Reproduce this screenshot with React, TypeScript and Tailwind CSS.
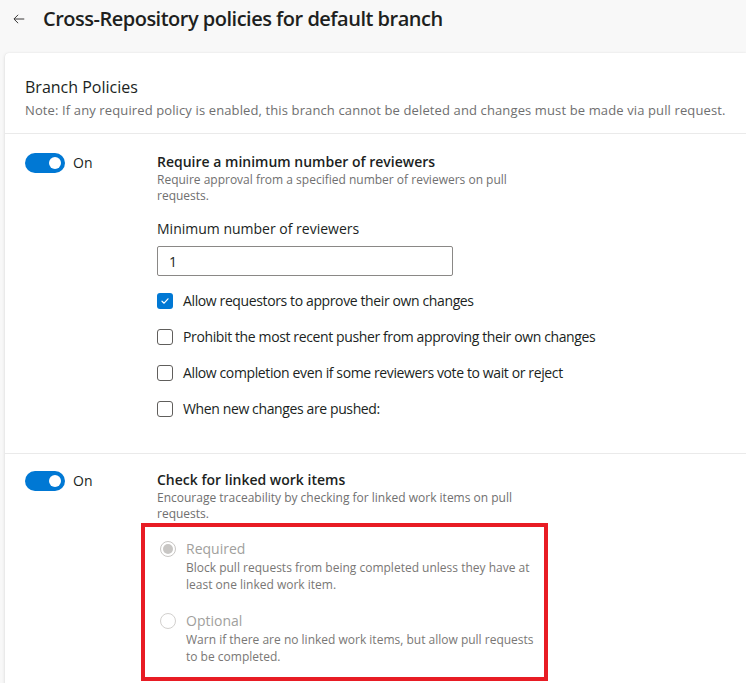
import React from "react";

const font = "font-['Segoe_UI','Open_Sans','Noto_Sans',sans-serif]";

function Toggle() {
  return (
    <div className="flex items-center gap-[8px]">
      <div className="w-[40px] h-[20px] rounded-full bg-[#0078d4] flex items-center justify-end pr-[4px]">
        <div className="w-[12px] h-[12px] rounded-full bg-white" />
      </div>
      <span className="text-[14px] text-[#201f1e] leading-[20px]">On</span>
    </div>
  );
}

function Checkbox({ checked, label }: { checked?: boolean; label: string }) {
  return (
    <div className="flex items-center gap-[10px] h-[20px]">
      {checked ? (
        <div className="w-[16px] h-[16px] rounded-[3px] bg-[#0078d4] flex items-center justify-center">
          <svg width="10" height="10" viewBox="0 0 10 10" fill="none">
            <path d="M2 5.2 L4.1 7.2 L8 2.8" stroke="white" strokeWidth="1.2" strokeLinecap="round" strokeLinejoin="round" />
          </svg>
        </div>
      ) : (
        <div className="w-[16px] h-[16px] rounded-[3px] border border-[#605e5c] bg-white" />
      )}
      <span className="text-[14px] text-[#201f1e] leading-[20px] tracking-[-0.38px]">{label}</span>
    </div>
  );
}

function Radio({ selected, label, desc }: { selected?: boolean; label: string; desc: string }) {
  return (
    <div className="flex gap-[10px]">
      <div className="pt-[2px]">
        {selected ? (
          <div className="w-[16px] h-[16px] rounded-full border border-[#c8c6c4] flex items-center justify-center">
            <div className="w-[10px] h-[10px] rounded-full bg-[#c8c6c4]" />
          </div>
        ) : (
          <div className="w-[16px] h-[16px] rounded-full border border-[#d2d0ce]" />
        )}
      </div>
      <div>
        <div className="text-[14px] leading-[20px] text-[#a19f9d]">{label}</div>
        <div className="text-[12px] leading-[17px] text-[#797775] max-w-[352px]">{desc}</div>
      </div>
    </div>
  );
}

export default function App() {
  return (
    <div className={`min-h-screen bg-[#f8f8f8] overflow-hidden ${font}`}>
      {/* Header */}
      <div className="h-[38px] flex items-center pl-[12px]">
        <svg width="14" height="14" viewBox="0 0 16 16" fill="none">
          <path d="M14 8H2.5M7 3.2 2.2 8 7 12.8" stroke="#323130" strokeWidth="1.1" />
        </svg>
        <h1 className="ml-[17px] text-[20px] font-semibold text-[#201f1e] leading-[28px] tracking-[-0.5px]">
          Cross-Repository policies for default branch
        </h1>
      </div>

      {/* Card */}
      <div className="ml-[5px] mt-[15px] bg-white rounded-tl-[4px] shadow-[0_1.6px_3.6px_rgba(0,0,0,0.13),0_0.3px_0.9px_rgba(0,0,0,0.11)]">
        <div className="px-[20px] pt-[23px] pb-[14px] border-b border-[#eaeaea]">
          <div className="text-[16px] leading-[22px] text-[#201f1e]">Branch Policies</div>
          <div className="mt-[3px] text-[13px] leading-[18px] text-[#6f6f6f] tracking-[0.12px] whitespace-nowrap">
            Note: If any required policy is enabled, this branch cannot be deleted and changes must be made via pull request.
          </div>
        </div>

        {/* Minimum reviewers */}
        <div className="flex pl-[20px] pt-[18px] pb-[34px] border-b border-[#eaeaea]">
          <div className="w-[132px] shrink-0 pt-[1px]">
            <Toggle />
          </div>
          <div>
            <div className="text-[14px] leading-[20px] font-semibold text-[#201f1e]">
              Require a minimum number of reviewers
            </div>
            <div className="text-[12px] leading-[16px] text-[#707070] max-w-[360px]">
              Require approval from a specified number of reviewers on pull requests.
            </div>
            <div className="mt-[15px] text-[14px] leading-[20px] text-[#201f1e]">Minimum number of reviewers</div>
            <div className="mt-[7px] w-[296px] h-[30px] border border-[#8a8886] rounded-[2px] flex items-center px-[11px] text-[14px] text-[#201f1e]">
              1
            </div>
            <div className="mt-[15px] flex flex-col gap-[16px]">
              <Checkbox checked label="Allow requestors to approve their own changes" />
              <Checkbox label="Prohibit the most recent pusher from approving their own changes" />
              <Checkbox label="Allow completion even if some reviewers vote to wait or reject" />
              <Checkbox label="When new changes are pushed:" />
            </div>
          </div>
        </div>

        {/* Linked work items */}
        <div className="flex pl-[20px] pt-[16px] pb-[40px]">
          <div className="w-[132px] shrink-0 pt-[1px]">
            <Toggle />
          </div>
          <div>
            <div className="text-[14px] leading-[20px] font-semibold text-[#201f1e]">Check for linked work items</div>
            <div className="text-[12px] leading-[16px] text-[#707070] max-w-[360px]">
              Encourage traceability by checking for linked work items on pull requests.
            </div>
            <div className="mt-[1px] -ml-[16px] w-[407px] border-4 border-[#e81c24] pl-[15px] pt-[12px] pb-[12px] flex flex-col gap-[18px]">
              <Radio
                selected
                label="Required"
                desc="Block pull requests from being completed unless they have at least one linked work item."
              />
              <Radio
                label="Optional"
                desc="Warn if there are no linked work items, but allow pull requests to be completed."
              />
            </div>
          </div>
        </div>
      </div>
    </div>
  );
}
